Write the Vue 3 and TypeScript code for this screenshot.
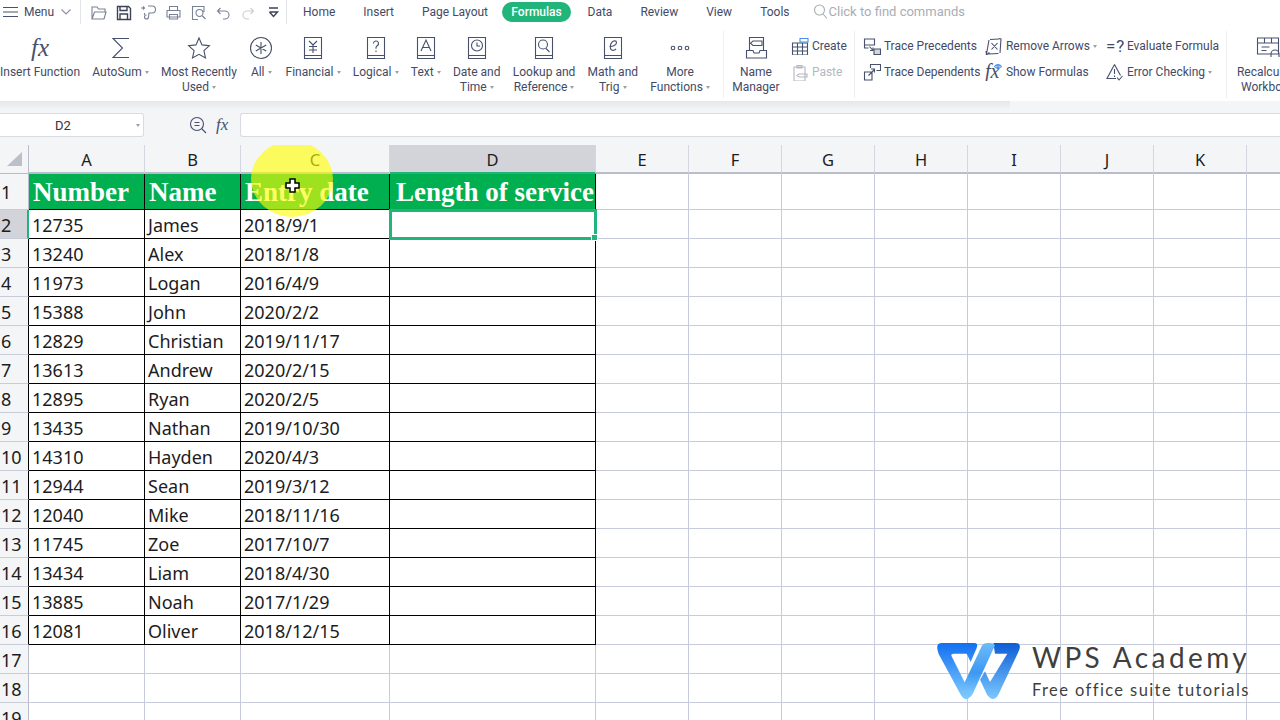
<script setup lang="ts">
interface Big { label: string[]; icon?: string[]; fx?: boolean; caret?: boolean; circles?: boolean }
interface Small { label: string; icon: string[]; caret?: boolean; off?: boolean; blue?: string[]; grey?: string[]; eq?: boolean; fx?: boolean }

const book = 'M3.5 1.5H20.5V22.5H3.5ZM3.5 19.5H20.5'
const ribbonA: Big[] = [
  { label: ['Insert Function'], fx: true },
  { label: ['AutoSum'], caret: true, icon: ['M20 2.5H4L13.5 12 4 21.5H20'] },
  { label: ['Most Recently', 'Used'], caret: true, icon: ['M12 2l3 6.9 7.4.8-5.5 5 1.6 7.3L12 18.3 5.500 22l1.600-7.300-5.500-5 7.400-.8z'] },
  { label: ['All'], caret: true, icon: ['M12 1.500a10.500 10.500 0 1 0 0 21 10.500 10.500 0 0 0 0-21ZM12 6v12M6.800 9l10.400 6M17.200 9 6.800 15'] },
  { label: ['Financial'], caret: true, icon: [book, 'M8 5l4 4 4-4M12 9v8M8 10.500h8M8 14h8'] },
  { label: ['Logical'], caret: true, icon: [book, 'M9.500 7.500a2.500 2.500 0 1 1 3.700 2.200c-.8.5-1.200 1-1.200 2v1M12 14.500v1.500'] },
  { label: ['Text'], caret: true, icon: [book, 'M7 15 12 4l5 11M8.500 11.500h7'] },
  { label: ['Date and', 'Time'], caret: true, icon: [book, 'M12 4a5.500 5.500 0 1 0 0 11 5.500 5.500 0 0 0 0-11ZM12 6.500v3.500h3'] },
  { label: ['Lookup and', 'Reference'], caret: true, icon: [book, 'M11 4a4.500 4.500 0 1 0 0 9 4.500 4.500 0 0 0 0-9ZM14 12.500l3.500 3.500'] },
  { label: ['Math and', 'Trig'], caret: true, icon: [book, 'M8.500 10.500c3.500.3 7-1.500 7-4 0-2-3-2.300-4.700-.2-1.700 2.200-2.200 6-.4 7.500 1.500 1.200 3.500.5 4.600-1'] },
  { label: ['More', 'Functions'], caret: true, circles: true }
]
const nameMgr: Big = {
  label: ['Name', 'Manager'],
  icon: ['M5.500 14V1.500h14V14', 'M2.500 14.500h6.500l1 2.500h5l1-2.500h6.500v7.500h-20Z', 'M9 5h9v4.500H9L6.500 7.200Z']
}
const col1: Small[] = [
  { label: 'Create', icon: ['M1.500 6h15v12h-15ZM1.500 10h15M1.500 14h15M6.500 6v12M11.500 6v12'], blue: ['M9 1.500h8v3.500H9Z'] },
  { label: 'Paste', off: true, icon: ['M3 4h11v14H3ZM6 2.500h5V5H6ZM8 11h8v3H8l-2-1.500Z'] }
]
const col2: Small[] = [
  { label: 'Trace Precedents', icon: ['M1.500 2h10v6h-10ZM1.500 8v3h4M6.500 9.500l3.500 4M7 13.500h3v-3'], grey: ['M11 12h6.500v5.500H11Z'] },
  { label: 'Trace Dependents', icon: ['M7.500 5V1.500h10v6h-4M1.500 9h7.500v8H1.500ZM5.500 12.500l6-6M8 6h3.500v3.500'] }
]
const col3: Small[] = [
  { label: 'Remove Arrows', caret: true, icon: ['M4 3 1.500 17M1 14l.5 4 3-2.500M14 1.500l2 .5-1 14M14 2l-9 .5M3.500 17l10-.5M6.500 6l6 6.500M12.500 6l-6 6.500'] },
  { label: 'Show Formulas', fx: true, icon: [], blue: ['M9.500 3.500c2-2.500 5-2.500 7 0-2 2.500-5 2.500-7 0ZM13 2.500a1 1 0 1 0 .01 0'] }
]
const col4: Small[] = [
  { label: 'Evaluate Formula', eq: true, icon: [] },
  { label: 'Error Checking', caret: true, icon: ['M8.500 1.500 1 15.500h9M8.500 1.500l6 11M8.500 6v5M8.500 12.500V14M11 14.500l2 2.500 3.500-4'] }
]
const quick: string[][] = [
  ['M2 5V3h5l1.500 2H15v3M2 15V5M2 15h12l2-7H4.500Z'],
  ['M2.500 2.500h11l2 2v11h-13ZM5 2.500v4h7v-4M5 15.500v-5.500h7.500v5.500'],
  ['M1 4h3.500M3 2.500 4.500 4 3 5.500M8 2h4a3 3 0 0 1 0 7H9l-.5 4a2 2 0 1 1-2-2', 'M4.500 9v2'],
  ['M4.500 6V2.500h8V6M2 6.500h13v6.500h-13ZM4.500 10.500h8V15h-8Z'],
  ['M14 8V2.500H2.500v13H8M9.500 5.500a3.500 3.500 0 1 0 0 7 3.500 3.500 0 0 0 0-7ZM12 11.500l3.500 3.500'],
  ['M5.500 4 2.500 7l3 3M2.500 7H10a4 4 0 0 1 0 8H8'],
  ['M10.500 4l3 3-3 3M13.500 7H7a4 4 0 0 0 0 8h2'],
  ['M4 4h9M4.500 8l4 4.500 4-4.500H4.500']
]
const tabs = ['Home', 'Insert', 'Page Layout', 'Formulas', 'Data', 'Review', 'View', 'Tools']
const columns = ['A', 'B', 'C', 'D', 'E', 'F', 'G', 'H', 'I', 'J', 'K', '']
const people: [string, string, string][] = [
  ['12735', 'James', '2018/9/1'], ['13240', 'Alex', '2018/1/8'], ['11973', 'Logan', '2016/4/9'],
  ['15388', 'John', '2020/2/2'], ['12829', 'Christian', '2019/11/17'], ['13613', 'Andrew', '2020/2/15'],
  ['12895', 'Ryan', '2020/2/5'], ['13435', 'Nathan', '2019/10/30'], ['14310', 'Hayden', '2020/4/3'],
  ['12944', 'Sean', '2019/3/12'], ['12040', 'Mike', '2018/11/16'], ['11745', 'Zoe', '2017/10/7'],
  ['13434', 'Liam', '2018/4/30'], ['13885', 'Noah', '2017/1/29'], ['12081', 'Oliver', '2018/12/15']
]
const heads = ['Number', 'Name', 'Entry date', 'Length of service']
const blanks = Array.from({ length: 8 }, (_, i) => i)
const emptyRows = [17, 18, 19]
const smallCols = [
  { cls: 'c1', items: col1 }, { cls: 'c2', items: col2 }, { cls: 'c3', items: col3 }, { cls: 'c4', items: col4 }
]
</script>

<template>
  <div class="app">
    <header class="top">
      <div class="menu">
        <svg class="menu-ic" width="15" height="12" viewBox="0 0 15 12"><path d="M0 1.500h15M0 6h15M0 10.500h15" /></svg>
        <span>Menu</span>
        <svg class="chev" width="10" height="6" viewBox="0 0 10 6"><path d="M.5.500 5 5 9.500.500" /></svg>
      </div>
      <div class="quick">
        <svg v-for="(q, i) in quick" :key="i" class="q" :class="{ dim: i === 6, dark: i === 1 || i === 7 }" width="17" height="17" viewBox="0 0 17 17">
          <path v-for="d in q" :key="d" :d="d" />
        </svg>
      </div>
      <nav class="tabs">
        <span v-for="t in tabs" :key="t" class="tab" :class="{ active: t === 'Formulas' }">{{ t }}</span>
      </nav>
      <div class="search">
        <svg width="15" height="15" viewBox="0 0 15 15"><path d="M6.500 1a5 5 0 1 0 0 10 5 5 0 0 0 0-10ZM10 10l4 4.500" /></svg>
        <span>Click to find commands</span>
      </div>
    </header>

    <section class="ribbon">
      <div class="big-group">
        <div v-for="b in ribbonA" :key="b.label[0]" class="big">
          <span v-if="b.fx" class="fx-big">fx</span>
          <svg v-else-if="b.circles" class="ic" viewBox="0 0 24 24">
            <circle cx="5" cy="12" r="1.800" /><circle cx="12" cy="12" r="1.800" /><circle cx="19" cy="12" r="1.800" />
          </svg>
          <svg v-else class="ic" viewBox="0 0 24 24"><path v-for="d in b.icon" :key="d" :d="d" /></svg>
          <div class="lbl">
            <div v-for="(l, i) in b.label" :key="l">{{ l }}<i v-if="b.caret && i === b.label.length - 1" class="caret" /></div>
          </div>
        </div>
      </div>
      <div class="sep" />
      <div class="big name-mgr">
        <svg class="ic" viewBox="0 0 24 24"><path v-for="d in nameMgr.icon" :key="d" :d="d" /></svg>
        <div class="lbl"><div v-for="l in nameMgr.label" :key="l">{{ l }}</div></div>
      </div>
      <template v-for="c in smallCols" :key="c.cls">
        <div class="small-col" :class="c.cls">
          <div v-for="s in c.items" :key="s.label" class="small" :class="{ off: s.off }">
            <span v-if="s.eq" class="eq">=?</span>
            <svg class="ic-s" viewBox="0 0 18 18">
              <text v-if="s.fx" x="0" y="15" class="fx-s">fx</text>
              <path v-for="d in s.icon" :key="d" :d="d" />
              <path v-for="d in s.blue" :key="d" :d="d" class="blue" />
              <path v-for="d in s.grey" :key="d" :d="d" class="grey" />
            </svg>
            <span>{{ s.label }}</span><i v-if="s.caret" class="caret" />
          </div>
        </div>
        <div v-if="c.cls === 'c1'" class="sep sep2" />
      </template>
      <div class="sep sep3" />
      <div class="big recalc">
        <svg class="ic" viewBox="0 0 24 24">
          <path d="M1.500 2h21v16h-21ZM1.500 7h21M8.500 2v5M15.500 2v5M5.500 11h8M5.500 14.500h5" />
          <path d="M15 21v-3a4 4 0 0 1 8 0v3" />
        </svg>
        <div class="lbl"><div>Recalculate</div><div>Workbook</div></div>
      </div>
    </section>

    <section class="formula">
      <div class="namebox"><span>D2</span><i class="caret" /></div>
      <svg class="zoom-ic" width="18" height="18" viewBox="0 0 18 18">
        <path d="M8 1.500a6.500 6.500 0 1 0 0 13 6.500 6.500 0 0 0 0-13ZM13 13l4 4M5.500 6.500h5M5.500 9.500h5" />
      </svg>
      <span class="fx-bar">fx</span>
      <div class="input" />
    </section>

    <section class="sheet">
      <div class="row head-row">
        <div class="rh corner"><svg width="16" height="14" viewBox="0 0 16 14"><path d="M15 0v14H0Z" /></svg></div>
        <div v-for="c in columns" :key="c" class="ch" :class="['w' + c, { sel: c === 'D' }]">{{ c }}</div>
      </div>
      <div class="row r1">
        <div class="rh">1</div>
        <div v-for="(h, i) in heads" :key="h" class="cell green" :class="'w' + columns[i]">{{ h }}</div>
        <div v-for="n in blanks" :key="n" class="cell" :class="'w' + columns[n + 4]" />
      </div>
      <div v-for="(p, i) in people" :key="p[0]" class="row">
        <div class="rh in-table" :class="{ 'rh-sel': i === 0 }">{{ i + 2 }}</div>
        <div class="cell blk wA">{{ p[0] }}</div>
        <div class="cell blk wB">{{ p[1] }}</div>
        <div class="cell blk wC">{{ p[2] }}</div>
        <div class="cell blk wD" :class="{ current: i === 0 }"><b v-if="i === 0" class="handle" /></div>
        <div v-for="n in blanks" :key="n" class="cell" :class="'w' + columns[n + 4]" />
      </div>
      <div v-for="r in emptyRows" :key="r" class="row">
        <div class="rh">{{ r }}</div>
        <div v-for="c in columns" :key="c" class="cell" :class="'w' + c" />
      </div>

      <div class="highlight" />
      <svg class="pointer" width="15" height="15" viewBox="0 0 15 15">
        <path d="M5 1h5v4h4v5h-4v4H5v-4H1V5h4Z" />
      </svg>

      <div class="brand">
        <svg width="100" height="68" viewBox="0 0 300 204" class="logo">
          <defs>
            <linearGradient id="lg1" x1="0" y1="0" x2="0" y2="1">
              <stop offset="0" stop-color="#1270f0" /><stop offset="1" stop-color="#80ccff" />
            </linearGradient>
            <linearGradient id="lg2" x1="0" y1="0" x2="0" y2="1">
              <stop offset="0" stop-color="#0c5cd6" /><stop offset="1" stop-color="#7cc8ff" />
            </linearGradient>
            <linearGradient id="lg3" x1="0" y1="0" x2="0" y2="1">
              <stop offset="0" stop-color="#6cbcfa" /><stop offset=".55" stop-color="#3e98f2" /><stop offset="1" stop-color="#86d0ff" />
            </linearGradient>
          </defs>
          <path class="lg-a" d="M35 15H132Q146 15 140 30L122 72 110 47H72Q60 47 66 57L105 135 122 172Q115 190 100 180 95 176 91 168L26 48Q14 15 35 15Z" />
          <path class="lg-c" d="M190 15H255Q278 15 265 42L205 170Q190 195 172 172L150 125 165 100 180 132 232 47H195Z" />
          <path class="lg-b" d="M172 15Q160 15 155 25L103 135 122 178Q125 172 128 168L195 22Q190 15 180 15Z" />
        </svg>
        <div class="brand-text">
          <div class="brand-name">WPS Academy</div>
          <div class="brand-sub">Free office suite tutorials</div>
        </div>
      </div>
    </section>
  </div>
</template>

<style>
html, body { margin: 0; background: #fff; overflow: hidden; }
</style>

<style scoped>
.app {
  width: 1280px; height: 720px; overflow: hidden; display: flex; flex-direction: column;
  font-family: Roboto, "Noto Sans", sans-serif; font-size: 12px; color: #434a66; background: #fff;
}
svg path, svg circle { fill: none; stroke: #47506c; stroke-width: 1.1; }

.top { height: 24px; display: flex; align-items: center; flex: none; }
.menu { width: 81px; height: 24px; padding-left: 3px; box-sizing: border-box; display: flex; align-items: center; border-right: 1px solid #e4e5e8; flex: none; }
.menu span { margin-left: 6px; }
.chev { margin-left: 7px; }
.chev path { stroke: #8a90a0; }
.quick { width: 206px; height: 24px; flex: none; box-sizing: border-box; padding-left: 9px; display: flex; align-items: center; gap: 8px; border-right: 1px solid #e4e5e8; }
.q path { stroke: #7a8194; }
.q.dark path { stroke: #3c4258; stroke-width: 1.400; }
.q.dim path { stroke: #ccced6; }
.tabs { display: flex; align-items: center; padding-left: 2px; }
.tab { padding: 1px 14px 0; line-height: 19px; white-space: nowrap; }
.tab.active { background: #21b57b; color: #fff; border-radius: 10px; width: 69px; box-sizing: border-box; padding: 1px 0 0; text-align: center; margin: 0 2.500px 0 0; font-weight: 500; }
.search { display: flex; align-items: center; margin: -2px 0 0 9px; gap: 1px; color: #a9adb6; font-size: 13px; }
.search path { stroke: #a9adb6; }

.ribbon { height: 77px; flex: none; display: flex; align-items: flex-start; background: #fff; position: relative; }
.big-group { display: flex; gap: 12.300px; flex: none; }
.big { display: flex; flex-direction: column; align-items: center; padding-top: 12px; flex: none; white-space: nowrap; }
.ic { width: 24px; height: 24px; display: block; }
.fx-big { font: italic 25px/24px "Liberation Serif", serif; height: 24px; color: #47506c; }
.lbl { margin-top: 5px; line-height: 15px; text-align: center; }
.caret { display: inline-block; width: 0; height: 0; margin-left: 3px; vertical-align: 2px; border: 2.500px solid transparent; border-bottom: 0; border-top: 3px solid #9a9fac; }
.sep { width: 1px; height: 67px; background: #eeeff1; margin: 7px 8px 0 13px; flex: none; }
.name-mgr { width: 48px; }
.small-col { display: flex; flex-direction: column; flex: none; padding-top: 9px; }
.small { height: 26px; display: flex; align-items: center; white-space: nowrap; }
.small.off { color: #b4b7bf; }
.small.off path { stroke: #b4b7bf; }
.ic-s { width: 18px; height: 18px; flex: none; margin-right: 3px; }
.fx-s { font: italic 20px "Liberation Serif", serif; fill: #47506c; }
.blue { stroke: #4a8fe8; }
.ic-s .grey { fill: #d5d6da; stroke: #47506c; }
.eq { font-size: 17px; line-height: 18px; width: 18px; margin-right: 3px; letter-spacing: 1px; }
.small .eq + .ic-s { display: none; }
.c1 { margin-left: 11px; width: 53px; }
.sep2 { margin: 7px 8px 0 10px; }
.c2 { width: 114px; margin-right: 8px; }
.c3 { width: 113px; margin-right: 8px; }
.c4 { width: 112px; }
.sep3 { margin: 7px 10px 0 8px; }

.formula {
  height: 44px; flex: none; display: flex; align-items: center; box-sizing: border-box; padding-top: 4px;
  background: linear-gradient(#e6e7ea, #f4f5f7) no-repeat 0 0 / 1010px 9px, #f4f5f7;
}
.namebox { width: 144px; height: 24px; box-sizing: border-box; background: #fff; border: 1px solid #d9dbe2; border-left: 0; border-radius: 0 3px 3px 0; display: flex; align-items: center; justify-content: center; position: relative; color: #333; padding: 1px 17px 0 0; font-size: 13px; }
.namebox .caret { position: absolute; right: 3px; top: 10px; }
.zoom-ic { margin-left: 45px; }
.fx-bar { font: italic 17px "Liberation Serif", serif; margin-left: 9px; color: #47506c; width: 24px; }
.input { flex: 1; height: 24px; box-sizing: border-box; background: #fff; border: 1px solid #d9dbe2; border-right: 0; border-radius: 3px 0 0 3px; }

.sheet { flex: 1; position: relative; overflow: hidden; font: 18px "Noto Sans", sans-serif; color: #1c1c22; }
.row { display: flex; height: 29px; }
.head-row { height: 29px; background: #f4f5f7; }
.r1 { height: 36px; }
.rh { width: 29px; flex: none; box-sizing: border-box; background: #f4f5f7; border-right: 1px solid #b9bccb; border-bottom: 1px solid #c8cbd8; font-size: 18px; line-height: 30px; padding-left: 1px; white-space: nowrap; }
.r1 .rh { line-height: 37px; }
.rh.in-table { border-right-color: #000; }
.rh-sel { background: #d2d4da; border-right: 2px solid #21b57b !important; }
.corner { display: flex; align-items: center; justify-content: center; border-bottom-color: #b9bccb; }
.corner path { fill: #bcbfc7; stroke: none; }
.ch { box-sizing: border-box; text-align: center; font-size: 16.500px; line-height: 30px; border-right: 1px solid #d4d7e2; border-bottom: 2px solid #b9bccb; flex: none; }
.ch.sel { background: #d2d4da; border-bottom-color: #21b57b; }
.cell { box-sizing: border-box; flex: none; border-right: 1px solid #c8cbdc; border-bottom: 1px solid #c8cbdc; padding-left: 3px; line-height: 30px; white-space: nowrap; position: relative; }
.wA { width: 116px; } .wB { width: 96px; } .wC { width: 149px; } .wD { width: 206px; }
.wE, .wF, .wG, .wH, .wI, .wJ, .wK { width: 93px; }
.w { width: 40px; }
.blk { border-right-color: #000; border-bottom-color: #000; }
.green { background: #00b050; color: #fff; font: bold 27px/37px "Liberation Serif", serif; border-right-color: #000; border-bottom-color: #000; padding-left: 4px; overflow: hidden; }
.green.wD { padding-left: 6px; }
.current { outline: 3px solid #21b57b; outline-offset: -2px; z-index: 2; }
.handle { position: absolute; right: -3px; bottom: -3px; width: 5px; height: 5px; background: #21b57b; border: 1px solid #fff; }

.highlight { position: absolute; left: 251px; top: -4px; width: 82px; height: 76px; border-radius: 50%; background: rgba(255, 255, 0, .62); z-index: 3; }
.pointer { position: absolute; left: 285px; top: 33px; z-index: 4; }
.pointer path { fill: #fff; stroke: #000; stroke-width: 1.500; }

.brand { position: absolute; left: 930px; top: 493px; display: flex; gap: 2px; z-index: 2; }
.logo .lg-a { fill: url(#lg1); stroke: none; }
.logo .lg-b { fill: url(#lg3); stroke: none; }
.logo .lg-c { fill: url(#lg2); stroke: none; }
.brand-text { color: #3f3f3f; white-space: nowrap; margin-top: 3px; }
.brand-name { font: 400 28px/32px Lato, sans-serif; letter-spacing: 3.400px; }
.brand-sub { font: 16.500px/24px Lato, sans-serif; letter-spacing: 1.400px; margin-top: 5px; }
</style>
